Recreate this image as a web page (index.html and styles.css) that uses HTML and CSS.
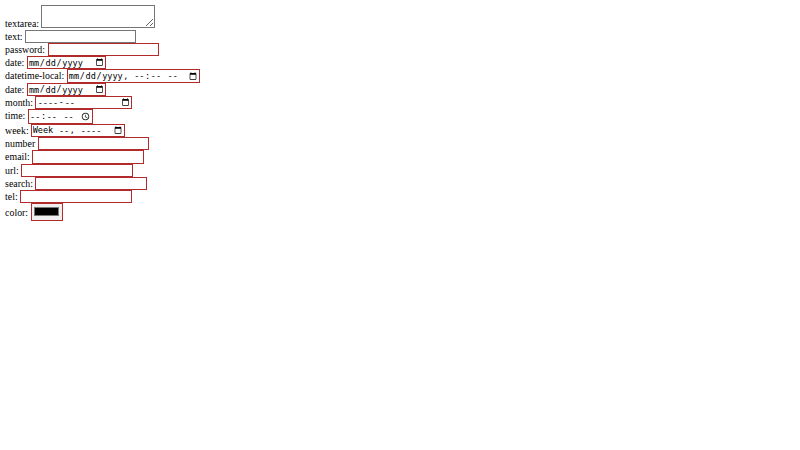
FILE: index.html
```html
<!DOCTYPE html>
<html>
<head>
<meta charset="utf-8">
<link rel="stylesheet" href="styles.css">
</head>
<body class="page">
<form class="form">
textarea: <textarea class="area"></textarea><br>
text: <input class="field" type="text"><br>
password: <input class="field bad" type="password"><br>
date: <input class="date bad" type="date"><br>
datetime-local: <input class="datetime bad" type="datetime-local"><br>
date: <input class="date bad" type="date"><br>
month: <input class="month bad" type="month"><br>
time: <input class="time bad" type="time"><br>
week: <input class="week bad" type="week"><br>
number <input class="field bad" type="number"><br>
email: <input class="field bad" type="email"><br>
url: <input class="field bad" type="url"><br>
search: <input class="field bad" type="search"><br>
tel: <input class="field bad" type="tel"><br>
color: <input class="bad" type="color"><br>
</form>
</body>
</html>
```
FILE: styles.css
```css
html {
  zoom: 0.64;
}
.page {
  font-family: "Liberation Serif", serif;
  font-size: 15.4px;
  background: #fff;
  color: #000;
}
.form {
  margin: 0;
}
.area {
  box-sizing: border-box;
  width: 178px;
  height: 35px;
}
.field {
  box-sizing: border-box;
  width: 174px;
}
.date {
  box-sizing: border-box;
  width: 124px;
}
.datetime {
  box-sizing: border-box;
  width: 208px;
}
.month {
  box-sizing: border-box;
  width: 151px;
}
.time {
  box-sizing: border-box;
  width: 102px;
}
.week {
  box-sizing: border-box;
  width: 146px;
}
.bad {
  border: 2px solid #b22a2a;
}
```
